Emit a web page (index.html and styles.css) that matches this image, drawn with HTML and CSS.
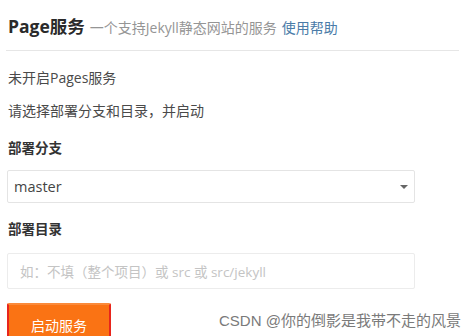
FILE: index.html
```html
<!DOCTYPE html>
<html lang="zh-CN">
<head>
<meta charset="utf-8">
<link rel="stylesheet" href="styles.css">
</head>
<body>
<div class="page">
  <div class="header">
    <span class="title">Page服务</span>
    <span class="subtitle">一个支持Jekyll静态网站的服务</span>
    <a class="help">使用帮助</a>
  </div>
  <div class="divider"></div>
  <p class="line status">未开启Pages服务</p>
  <p class="line hint">请选择部署分支和目录，并启动</p>
  <div class="label label1">部署分支</div>
  <div class="select">
    <span class="value">master</span>
    <span class="caret"></span>
  </div>
  <div class="label label2">部署目录</div>
  <div class="input">如：不填（整个项目）或 src 或 src/jekyll</div>
  <div class="footer">
    <div class="button">启动服务</div>
    <div class="watermark">CSDN @你的倒影是我带不走的风景</div>
  </div>
</div>
</body>
</html>
```
FILE: styles.css
```css
* { box-sizing: border-box; }
html, body { margin: 0; padding: 0; background: #fff; overflow: hidden; }
body {
  width: 474px;
  height: 336px;
  font-family: "Open Sans", "Noto Sans CJK SC", sans-serif;
  color: #333;
}
.page {
  padding: 13px 0 0 7px;
}
.header {
  display: flex;
  align-items: baseline;
  padding-left: 1px;
  height: 26px;
}
.title {
  font-size: 17.5px;
  font-weight: 700;
  color: #2a2a2a;
  margin-right: 5px;
}
.subtitle {
  font-size: 14px;
  color: #959595;
}
.help {
  font-size: 14px;
  color: #4a7ba8;
  margin-left: 5px;
}
.divider {
  width: 453px;
  margin-left: -1px;
  margin-top: 11px;
  height: 1px;
  background: #e6e6e6;
}
.line {
  margin: 0;
  font-size: 14px;
  line-height: 20px;
  color: #4a4a4a;
  padding-left: 1px;
}
.status { margin-top: 17px; height: 33px; }
.hint { height: 20px; }
.label {
  font-size: 13.5px;
  line-height: 20px;
  font-weight: 700;
  color: #333;
  padding-left: 1px;
}
.label1 { margin-top: 17px; }
.label2 { margin-top: 16px; }
.select {
  margin-top: 12px;
  width: 408px;
  height: 33px;
  border: 1px solid #e4e4e4;
  border-radius: 2px;
  display: flex;
  align-items: center;
  justify-content: space-between;
  padding: 0 6px 0 6px;
}
.value {
  font-size: 14.5px;
  color: #444;
}
.caret {
  width: 0;
  height: 0;
  border-left: 4px solid transparent;
  border-right: 4px solid transparent;
  border-top: 4px solid #666;
}
.input {
  margin-top: 14px;
  width: 408px;
  height: 36px;
  border: 1px solid #ececec;
  border-radius: 2px;
  display: flex;
  align-items: center;
  padding-left: 12px;
  font-size: 13.5px;
  color: #c4c4c4;
}
.footer {
  display: flex;
  align-items: flex-start;
  margin-top: 14px;
}
.button {
  width: 104px;
  height: 42px;
  background: #fa7314;
  border: 2px solid #e8251c;
  border-top-color: #fb8a3a;
  border-radius: 2px;
  color: #fff;
  font-size: 14px;
  display: flex;
  align-items: center;
  justify-content: center;
  padding-top: 2px;
}
.watermark {
  margin-left: 108px;
  margin-top: 8px;
  font-size: 15px;
  line-height: 20px;
  color: #7a7a7a;
  font-family: "Liberation Sans", "Noto Sans CJK SC", sans-serif;
}
```
